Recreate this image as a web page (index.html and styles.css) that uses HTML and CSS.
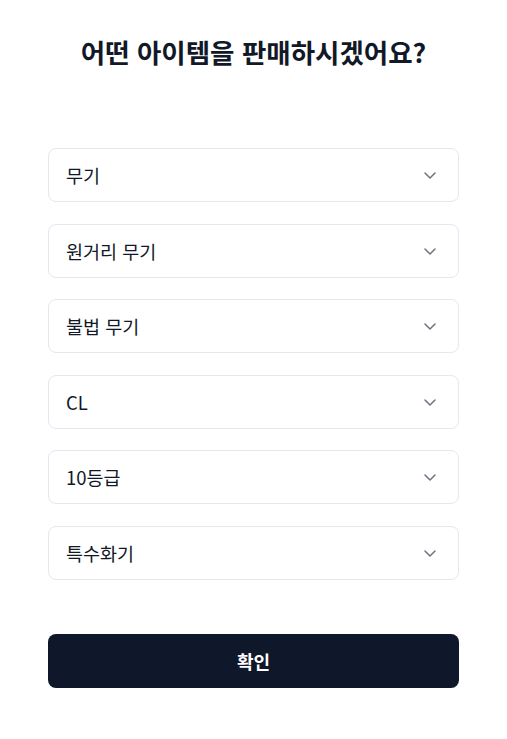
FILE: index.html
```html
<!DOCTYPE html>
<html lang="ko">
<head>
<meta charset="utf-8">
<link rel="stylesheet" href="styles.css">
</head>
<body>
<main class="page">
  <h1 class="title">어떤 아이템을 판매하시겠어요?</h1>
  <div class="fields">
    <div class="select"><span>무기</span><svg class="chev" viewBox="0 0 16 16"><path d="M3 6l5 5 5-5"/></svg></div>
    <div class="select"><span>원거리 무기</span><svg class="chev" viewBox="0 0 16 16"><path d="M3 6l5 5 5-5"/></svg></div>
    <div class="select"><span>불법 무기</span><svg class="chev" viewBox="0 0 16 16"><path d="M3 6l5 5 5-5"/></svg></div>
    <div class="select"><span>CL</span><svg class="chev" viewBox="0 0 16 16"><path d="M3 6l5 5 5-5"/></svg></div>
    <div class="select"><span>10등급</span><svg class="chev" viewBox="0 0 16 16"><path d="M3 6l5 5 5-5"/></svg></div>
    <div class="select"><span>특수화기</span><svg class="chev" viewBox="0 0 16 16"><path d="M3 6l5 5 5-5"/></svg></div>
  </div>
  <button class="confirm">확인</button>
</main>
</body>
</html>
```
FILE: styles.css
```css
* { box-sizing: border-box; }
html, body { margin: 0; background: #fff; }
body {
  font-family: "Noto Sans CJK KR", "Noto Sans", sans-serif;
  color: #111827;
}
.page {
  width: 411px;
  margin: 0 auto;
  padding-top: 34px;
  display: flex;
  flex-direction: column;
}
.title {
  margin: 0;
  font-size: 26.5px;
  line-height: 36px;
  font-weight: 700;
  text-align: center;
  color: #111827;
}
.fields {
  margin-top: 78px;
  display: flex;
  flex-direction: column;
  gap: 21.6px;
}
.select {
  height: 54px;
  border: 1px solid #e2e8f0;
  border-radius: 8px;
  padding: 0 20px 0 17px;
  display: flex;
  align-items: center;
  justify-content: space-between;
  font-size: 18.5px;
  color: #111827;
}
.chev {
  width: 16px;
  height: 16px;
  fill: none;
  stroke: #6b7280;
  stroke-width: 1.5;
  stroke-linecap: round;
  stroke-linejoin: round;
}
.confirm {
  margin-top: 54px;
  height: 54px;
  border: none;
  border-radius: 8px;
  background: #0f172a;
  color: #fff;
  font-family: inherit;
  font-size: 18px;
  font-weight: 700;
}
```
